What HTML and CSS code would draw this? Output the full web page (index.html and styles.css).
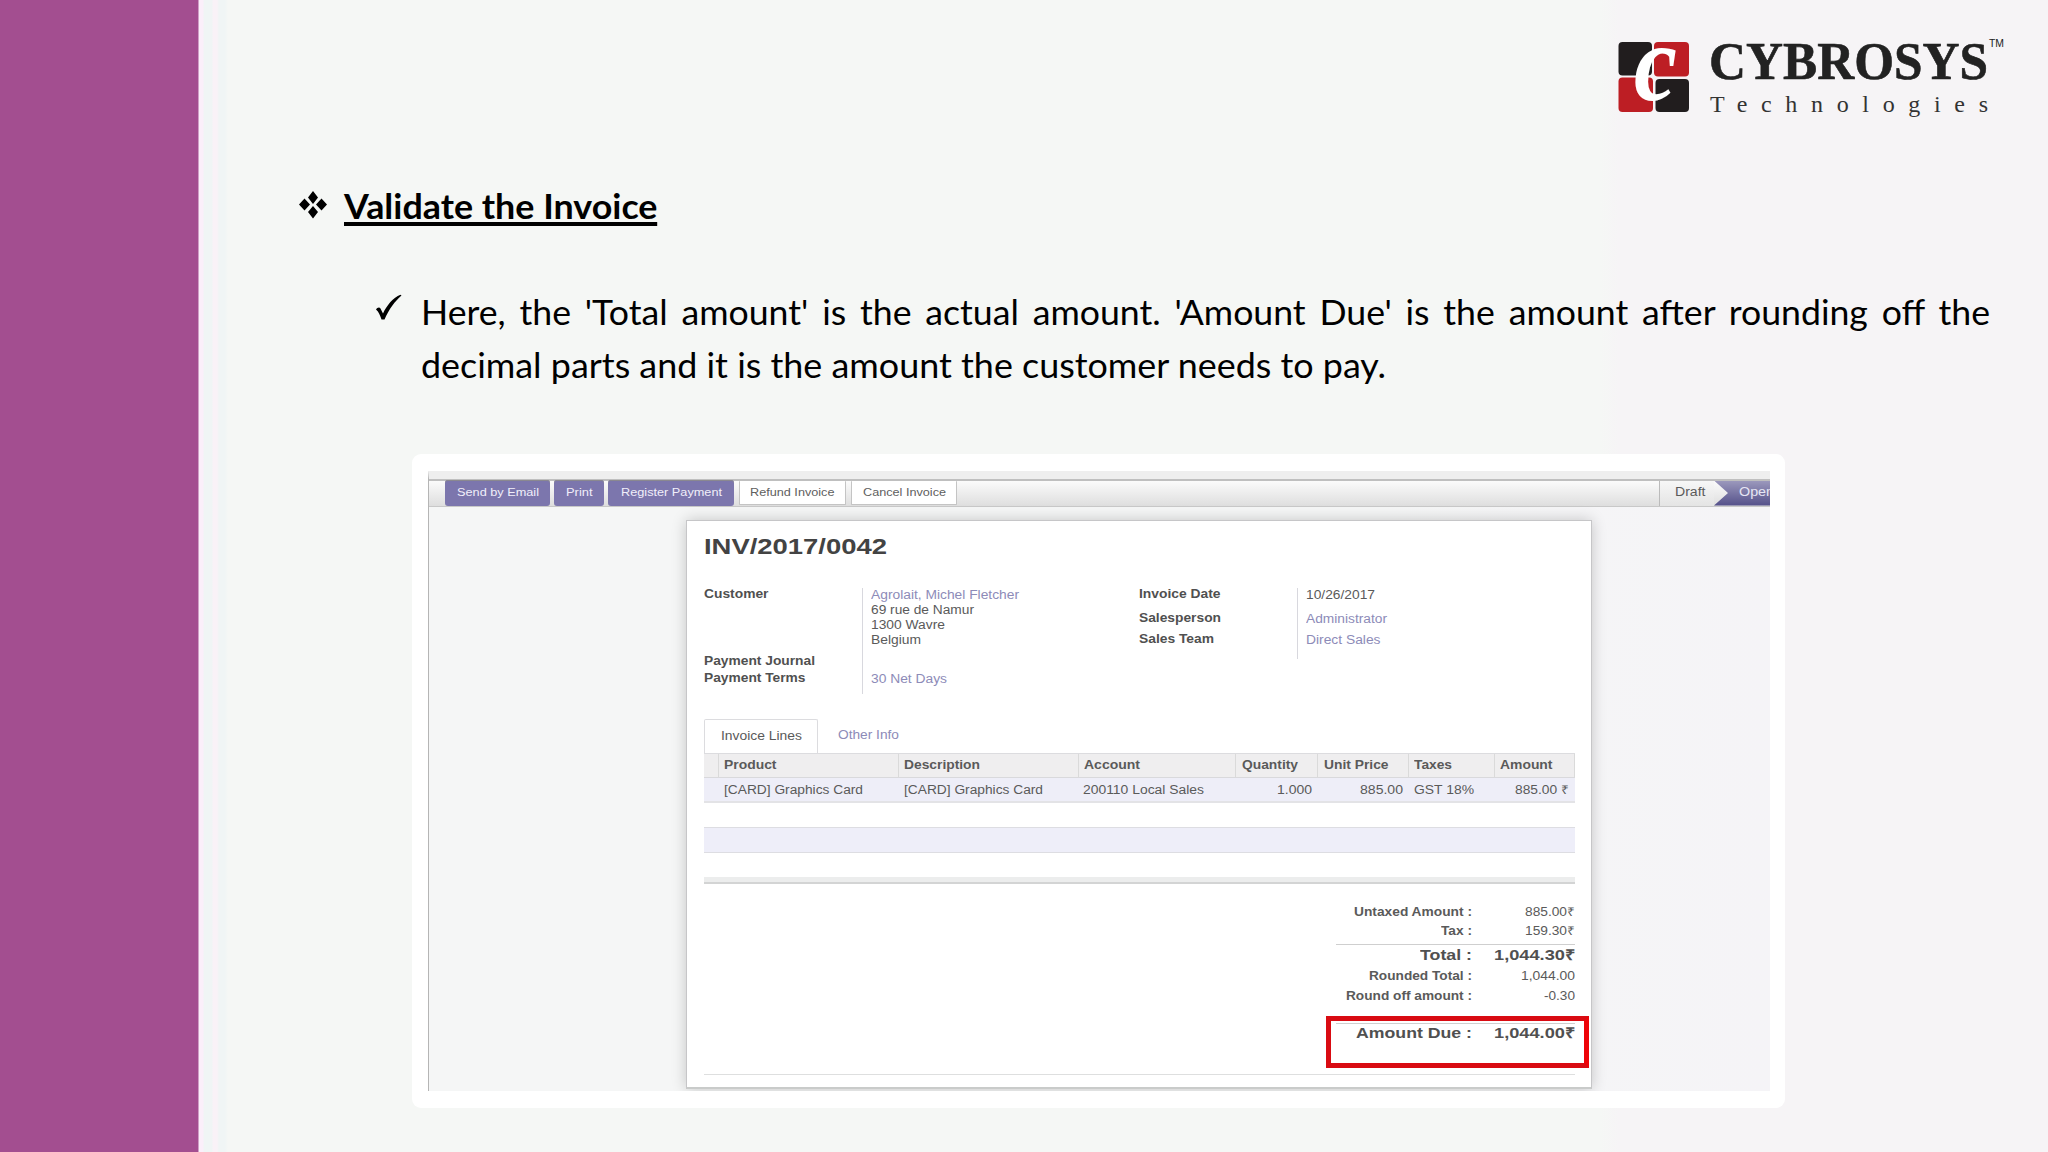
FILE: index.html
```html
<!DOCTYPE html>
<html lang="en">
<head>
<meta charset="utf-8">
<title>Validate the Invoice</title>
<link rel="stylesheet" href="styles.css">
</head>
<body>
<div class="slide">
  <aside class="band"></aside>
  <div class="edge"></div>
  <main class="content">
    <header class="brand">
      <svg class="logo" width="400" height="90" viewBox="1615 35 400 90">
        <rect x="1618.5" y="42" width="33.5" height="33.5" rx="4" fill="#211d1e"/>
        <rect x="1654" y="42" width="35" height="34.5" rx="4" fill="#bd1e24"/>
        <rect x="1618.5" y="77.5" width="34.5" height="34.5" rx="4" fill="#bd1e24"/>
        <rect x="1655.500" y="79" width="33.500" height="33" rx="4" fill="#211d1e"/>
        <text x="1634" y="99.500" class="mark" textLength="43" lengthAdjust="spacingAndGlyphs">c</text>
        <text x="1709" y="79.300" class="name" textLength="279" lengthAdjust="spacingAndGlyphs">CYBROSYS</text>
        <text x="1989" y="47" class="tm" textLength="15" lengthAdjust="spacingAndGlyphs">TM</text>
        <text x="1710" y="111.500" class="sub" textLength="278">Technologies</text>
      </svg>
    </header>

    <section class="topic">
      <svg class="diamonds" width="28" height="28" viewBox="0 0 28 28"><path d="M14 0l5 6.500-5 6.500-5-6.500zM14 15l5 6-5 6.500-5-6.500zM5.500 7.500l5.500 6-5.500 6-5.500-6zM22.500 7.500l5.500 6-5.500 6-5.500-6z"/></svg>
      <h1><span data-w="313.5">Validate the Invoice</span></h1>
    </section>

    <section class="point">
      <svg class="check" width="28" height="28" viewBox="0 0 28 28"><path d="M1 15.500C2 13.500 4.500 12.500 5.500 14.500L8 19.500C12 11 18 4 25.500.800L26.500 1.400C20 7 14 15 9.500 25.500H6.500C5 21.500 4 18 1 15.500z"/></svg>
      <div class="lines">
        <div class="justified"><span data-w="1569">Here, the 'Total amount' is the actual amount. 'Amount Due' is the amount after rounding off the</span></div>
        <div><span data-w="965">decimal parts and it is the amount the customer needs to pay.</span></div>
      </div>
    </section>

    <figure class="frame">
      <div class="app">
        <div class="toolbar">
          <div class="actions">
            <b class="btn send"><span data-w="82">Send by Email</span></b>
            <b class="btn print"><span data-w="26.5">Print</span></b>
            <b class="btn register"><span data-w="101">Register Payment</span></b>
            <b class="btn plain refund"><span data-w="84.5">Refund Invoice</span></b>
            <b class="btn plain cancel"><span data-w="83">Cancel Invoice</span></b>
          </div>
          <div class="status">
            <div class="draft"><span data-w="30.5">Draft</span></div>
            <div class="open"><span data-w="35">Open</span></div>
          </div>
        </div>
        <div class="sheet">
          <h2><span data-w="183">INV/2017/0042</span></h2>
          <div class="details">
            <div class="labels left">
              <div><span data-w="64.5">Customer</span></div>
              <div class="journal"><span data-w="111">Payment Journal</span></div>
              <div class="terms"><span data-w="101.5">Payment Terms</span></div>
            </div>
            <div class="values first">
              <div class="link"><span data-w="148">Agrolait, Michel Fletcher</span></div>
              <div><span data-w="103">69 rue de Namur</span></div>
              <div><span data-w="74">1300 Wavre</span></div>
              <div><span data-w="50">Belgium</span></div>
              <div class="link days"><span data-w="76">30 Net Days</span></div>
            </div>
            <div class="labels right">
              <div><span data-w="81.5">Invoice Date</span></div>
              <div class="person"><span data-w="82">Salesperson</span></div>
              <div class="team"><span data-w="75">Sales Team</span></div>
            </div>
            <div class="values second">
              <div><span data-w="69">10/26/2017</span></div>
              <div class="link person"><span data-w="81">Administrator</span></div>
              <div class="link team"><span data-w="74.5">Direct Sales</span></div>
            </div>
          </div>
          <div class="tabs">
            <div class="tab active"><span data-w="81">Invoice Lines</span></div>
            <div class="tab"><span data-w="61">Other Info</span></div>
          </div>
          <div class="grid head">
            <i></i>
            <i><span data-w="52.5">Product</span></i>
            <i><span data-w="76">Description</span></i>
            <i><span data-w="56">Account</span></i>
            <i class="wide"><span data-w="56">Quantity</span></i>
            <i class="wide"><span data-w="64.5">Unit Price</span></i>
            <i><span data-w="38">Taxes</span></i>
            <i><span data-w="52.5">Amount</span></i>
          </div>
          <div class="grid row">
            <i></i>
            <i><span data-w="139">[CARD] Graphics Card</span></i>
            <i><span data-w="139">[CARD] Graphics Card</span></i>
            <i><span data-w="121">200110 Local Sales</span></i>
            <i class="num"><span data-w="35">1.000</span></i>
            <i class="num"><span data-w="43">885.00</span></i>
            <i><span data-w="60">GST 18%</span></i>
            <i class="num"><span data-w="54">885.00 ₹</span></i>
          </div>
          <div class="stripe"></div>
          <div class="foot"></div>
          <div class="totals">
            <div class="sum"><b><span data-w="118">Untaxed Amount :</span></b><span data-w="50">885.00₹</span></div>
            <div class="sum tax"><b><span data-w="31">Tax :</span></b><span data-w="50">159.30₹</span></div>
            <div class="sum big"><b><span data-w="52">Total :</span></b><b><span data-w="81">1,044.30₹</span></b></div>
            <div class="sum rounded"><b><span data-w="103">Rounded Total :</span></b><span data-w="54">1,044.00</span></div>
            <div class="sum"><b><span data-w="126">Round off amount :</span></b><span data-w="31">-0.30</span></div>
            <div class="due">
              <div class="sum big"><b><span data-w="116">Amount Due :</span></b><b><span data-w="81">1,044.00₹</span></b></div>
            </div>
          </div>
          <div class="end"></div>
        </div>
      </div>
    </figure>
  </main>
</div>
<script src="fit.js"></script>
</body>
</html>
```
FILE: fit.js
```js
// Stretch each label horizontally so that it takes exactly data-w pixels.
document.querySelectorAll('[data-w]').forEach(function (el) {
  var target = parseFloat(el.dataset.w);
  var natural = el.getBoundingClientRect().width;
  el.style.transform = 'scaleX(' + target / natural + ')';
  el.style.marginRight = (target - natural) + 'px';
});
```
FILE: styles.css
```css
* { box-sizing: border-box; }
body { margin: 0; }
h1, h2, figure { margin: 0; }
i { font-style: normal; }
[data-w] { display: inline-block; white-space: nowrap; transform-origin: 0 50%; flex: none; }

.slide {
  display: flex;
  width: 2048px;
  height: 1152px;
  overflow: hidden;
  background: linear-gradient(90deg, #f5f7f5 0, #f5f7f5 1600px, #f6f4f6 1620px);
}
.band { flex: none; width: 198px; background: #a34e90; }
.edge { flex: none; width: 30px; background: linear-gradient(90deg, #cfa0c6 0 1px, #fbeffa 1px 5px, #f0f5f5 6px 14px, #f9f2f7 15px 19px, #f0f5f5 21px 27px, #f5f7f5); }
.content { flex: none; width: 1820px; }

.brand { display: flex; justify-content: flex-end; height: 125px; padding: 35px 33px 0 0; }
.logo { flex: none; display: block; }
.mark { font: italic bold 110px "Liberation Serif", serif; fill: #fff; }
.name { font: bold 53px "Liberation Serif", serif; fill: #222; stroke: #222; stroke-width: .6px; }
.tm { font: 11px "Liberation Sans", sans-serif; fill: #222; }
.sub { font: 24px "Liberation Serif", serif; fill: #333; }

.topic { display: flex; gap: 17px; height: 160px; padding: 53px 0 0 71px; }
.diamonds { flex: none; margin-top: 13px; }
.topic h1 { height: 60px; font: bold 34px/55px Lato, sans-serif; }
.topic h1 span { height: 47.500px; border-bottom: 4px solid #000; }

.point { display: flex; gap: 18px; height: 168.500px; padding-left: 147px; }
.check { flex: none; margin-top: 9px; }
.lines { font: 34px/53px Lato, sans-serif; color: #000; }
.lines > div { height: 53px; }
.justified { word-spacing: 4.500px; }

.frame {
  width: 1373px;
  height: 654px;
  margin-left: 184px;
  padding: 17px 16px;
  border-radius: 9px;
  background: #fff;
}
.app {
  display: flex;
  flex-direction: column;
  align-items: flex-start;
  width: 1342px;
  height: 620px;
  overflow: hidden;
  border-left: 1px solid #b5b5b5;
  border-top: 8px solid #eee;
  background: linear-gradient(90deg, #f5f6f6 70%, #f5f4f7);
  font: 12px/15px "Liberation Sans", Arial, sans-serif;
  color: #5a5a5a;
}
.toolbar {
  display: flex;
  justify-content: space-between;
  flex: none;
  width: 1341px;
  height: 28px;
  border-top: 2px solid #bfbfbf;
  border-bottom: 1px solid #c8c8c8;
  background: linear-gradient(#fbfbfb, #dedede);
}
.actions { display: flex; padding-left: 16px; }
.btn {
  height: 26px;
  margin-top: -1px;
  border-radius: 3px;
  background: #7c76ad;
  box-shadow: inset 0 1px #8a8890;
  color: #f1effa;
  font: 10px/26px "Liberation Sans", Arial, sans-serif;
  text-align: center;
}
.send { width: 105px; margin-right: 4px; }
.print { width: 50px; margin-right: 4px; }
.register { width: 126px; margin-right: 5px; }
.plain { height: 24px; margin-top: 0; line-height: 24px; border: 1px solid #c4c4c4; border-top-width: 0; background: #fff; box-shadow: none; color: #606060; border-radius: 1px; }
.refund { width: 107px; margin-right: 5px; }
.cancel { width: 106px; }
.status { display: flex; width: 111px; border-left: 1px solid #bbb; font-size: 12px; line-height: 23px; }
.draft { width: 54px; padding-left: 15px; background: linear-gradient(#f7f7f7, #e4e4e4); }
.open {
  width: 56px;
  padding-left: 25px;
  color: #e6e6f4;
  background: linear-gradient(#9b98bc, #54508a);
  clip-path: polygon(0 0, 100% 0, 100% 100%, 0 100%, 14px 50%);
}

.sheet {
  flex: none;
  width: 906px;
  height: 569px;
  margin: 13px 0 0 257px;
  padding: 0 16px 0 17px;
  border: 1px solid #c6c6c8;
  border-bottom: 2px solid #c9cbca;
  background: #fff;
  box-shadow: 0 0 14px rgba(0,0,0,.2);
}
.sheet h2 { height: 66px; padding-top: 11px; font: bold 22px/30px "Liberation Sans", Arial, sans-serif; color: #434343; }
.details { display: flex; height: 132px; }
.labels { font-weight: bold; color: #505050; }
.labels.left { width: 158px; }
.journal { margin-top: 52.500px; }
.terms { margin-top: 2px; }
.values { margin-top: 1px; padding-left: 8px; border-left: 1px solid #d8d8de; }
.first { width: 268px; height: 106px; }
.link { color: #8d8bb8; }
.days { margin-top: 24px; }
.labels.right { width: 167px; padding-left: 9px; }
.second { height: 71px; }
.person { margin-top: 9px; }
.team { margin-top: 6.500px; }

.tabs { display: flex; height: 34px; line-height: 33px; }
.tab { width: 114px; padding-left: 20px; color: #8d8bb8; }
.active { border: 1px solid #dcdcdf; border-bottom: 0; padding-left: 16px; color: #5a5a5a; background: #fff; border-radius: 2px 2px 0 0; }
.grid { display: grid; grid-template-columns: 15px 180px 179.500px 157px 82px 91.500px 86px 80px; height: 25px; line-height: 25px; }
.head { font-weight: bold; color: #5a5a5a; background: #efeeef; border-top: 1px solid #dcdcdf; border-bottom: 1px solid #d9d9dc; line-height: 23px; }
.head i { padding-left: 5px; border-right: 1px solid #dadada; }
.head .wide { padding-left: 6px; }
.row { background: #eeeef8; border-bottom: 2px solid #e3e3e6; }
.row i { padding-left: 4.500px; }
.row .num { padding-right: 6px; text-align: right; }
.stripe { height: 26px; margin-top: 24px; background: #eeeef9; border-top: 1px solid #dddde2; border-bottom: 1px solid #dddde2; }
.foot { height: 7px; margin-top: 24px; background: #eceded; border-bottom: 2px solid #d3d4d4; }
.totals { width: 239px; height: 190px; margin-left: auto; padding-top: 20px; }
.sum { display: flex; justify-content: space-between; height: 19.300px; line-height: 16px; }
.sum > :first-child { width: 136px; text-align: right; }
.big { height: 24px; padding-top: 2.500px; border-top: 1px solid #cfcfcf; font-size: 14.500px; color: #505050; }
.rounded { margin-top: .7px; }
.tax { height: 21px; }
.due { width: 263px; height: 52px; margin: 9px 0 0 -10px; padding: 2px 9px 0 5px; border: 5px solid #d90b12; border-right-color: #ee0308; }
.due .big { width: 239px; padding-top: 1px; }
.end { height: 1px; background: #dedfdf; }
```
